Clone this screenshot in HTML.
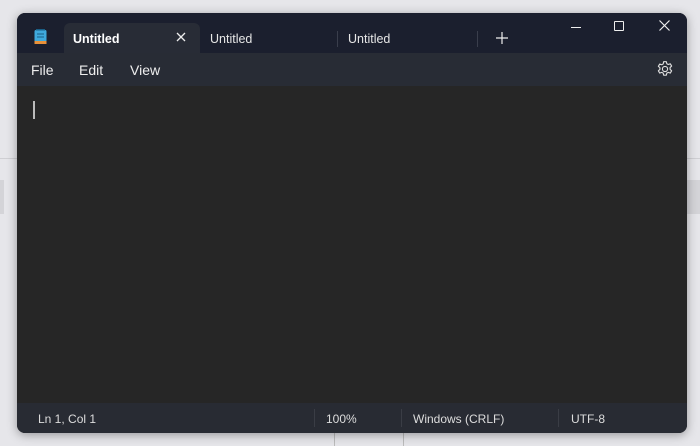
<!DOCTYPE html>
<html><head><style>
body{margin:0;width:700px;height:446px;background:#e6e6ea;position:relative;overflow:hidden;font-family:"Liberation Sans",sans-serif;}
.win{position:absolute;left:17px;top:13px;width:670px;height:420px;border-radius:8px;overflow:hidden;background:#262626;box-shadow:0 2px 10px rgba(0,0,0,.35);}
.title{position:absolute;left:0;top:0;width:670px;height:40px;background:#1b1f2e;}
.tab{position:absolute;left:47px;top:10px;width:136px;height:30px;background:#282c36;border-radius:6px 6px 0 0;}
.t{position:absolute;color:#e6e6e6;font-size:12.5px;}
.menu{position:absolute;left:0;top:40px;width:670px;height:33px;background:#282c35;}
.status{position:absolute;left:0;top:390px;width:670px;height:30px;background:#282b33;}
.sep{position:absolute;top:6px;width:1px;height:18px;background:#3a3d45;}
.m{position:absolute;top:9px;color:#eee;font-size:14px;}
.s{position:absolute;top:9px;color:#ddd;font-size:12px;}
</style></head><body>
<div style="position:absolute;left:0;top:158px;width:17px;height:1px;background:#cfcfd3"></div>
<div style="position:absolute;left:0;top:180px;width:4px;height:34px;background:#d4d4d8"></div>
<div style="position:absolute;left:687px;top:158px;width:13px;height:1px;background:#cfcfd3"></div>
<div style="position:absolute;left:687px;top:180px;width:13px;height:34px;background:#d4d4d8"></div>
<div style="position:absolute;left:403px;top:433px;width:1px;height:13px;background:#bbb"></div>
<div style="position:absolute;left:334px;top:433px;width:1px;height:13px;background:#bbb"></div>
<div class="win">
 <div class="title">
  <svg style="position:absolute;left:17px;top:16px" width="13" height="16"><rect x="0.5" y="1" width="12" height="14" rx="1.5" fill="#3fa9dc"/><rect x="0.5" y="12" width="12" height="3" fill="#e8913a"/><line x1="3" y1="5" x2="10" y2="5" stroke="#1a5f86"/><line x1="3" y1="8" x2="10" y2="8" stroke="#1a5f86"/><rect x="2" y="0" width="9" height="1.5" fill="#1a5f86"/></svg>
  <div class="tab"></div>
  <div class="t" style="left:56px;top:19px;font-weight:bold;color:#fff">Untitled</div>
  <svg style="position:absolute;left:159px;top:19px" width="10" height="10"><path d="M1 1L9 9M9 1L1 9" stroke="#eee" stroke-width="1.3"/></svg>
  <div class="t" style="left:193px;top:19px">Untitled</div>
  <div style="position:absolute;left:320px;top:18px;width:1px;height:16px;background:#3a3e4c"></div>
  <div class="t" style="left:331px;top:19px">Untitled</div>
  <div style="position:absolute;left:460px;top:18px;width:1px;height:16px;background:#3a3e4c"></div>
  <svg style="position:absolute;left:479px;top:19px" width="12" height="12"><path d="M6 0V12M0 6H12" stroke="#eee" stroke-width="1.2"/></svg>
  <div style="position:absolute;left:554px;top:14px;width:10px;height:1.2px;background:#eee"></div>
  <div style="position:absolute;left:597px;top:8px;width:8px;height:8px;border:1.3px solid #eee;border-radius:1px"></div>
  <svg style="position:absolute;left:642px;top:7px" width="11" height="11"><path d="M0.5 0.5L10.5 10.5M10.5 0.5L0.5 10.5" stroke="#eee" stroke-width="1.2"/></svg>
 </div>
 <div class="menu">
  <div class="m" style="left:14px">File</div>
  <div class="m" style="left:62px">Edit</div>
  <div class="m" style="left:113px">View</div>
  <svg style="position:absolute;left:639px;top:7px" width="18" height="18" viewBox="0 0 16 16"><circle cx="8" cy="8" r="2.3" fill="none" stroke="#ddd" stroke-width="1"/><path d="M6.8 1.5h2.4l.4 1.8 1.3.7 1.8-.6 1.2 2-1.4 1.3v1.6l1.4 1.3-1.2 2-1.8-.6-1.3.7-.4 1.8H6.8l-.4-1.8-1.3-.7-1.8.6-1.2-2 1.4-1.3V6.9L2.1 5.6l1.2-2 1.8.6 1.3-.7z" fill="none" stroke="#ddd" stroke-width="1" stroke-linejoin="round"/></svg>
 </div>
 <div style="position:absolute;left:16px;top:88px;width:1.5px;height:18px;background:#bbb"></div>
 <div class="status">
  <div class="s" style="left:21px">Ln 1, Col 1</div>
  <div class="sep" style="left:297px"></div>
  <div class="s" style="left:309px">100%</div>
  <div class="sep" style="left:384px"></div>
  <div class="s" style="left:396px">Windows (CRLF)</div>
  <div class="sep" style="left:541px"></div>
  <div class="s" style="left:554px">UTF-8</div>
 </div>
</div>
</body></html>
